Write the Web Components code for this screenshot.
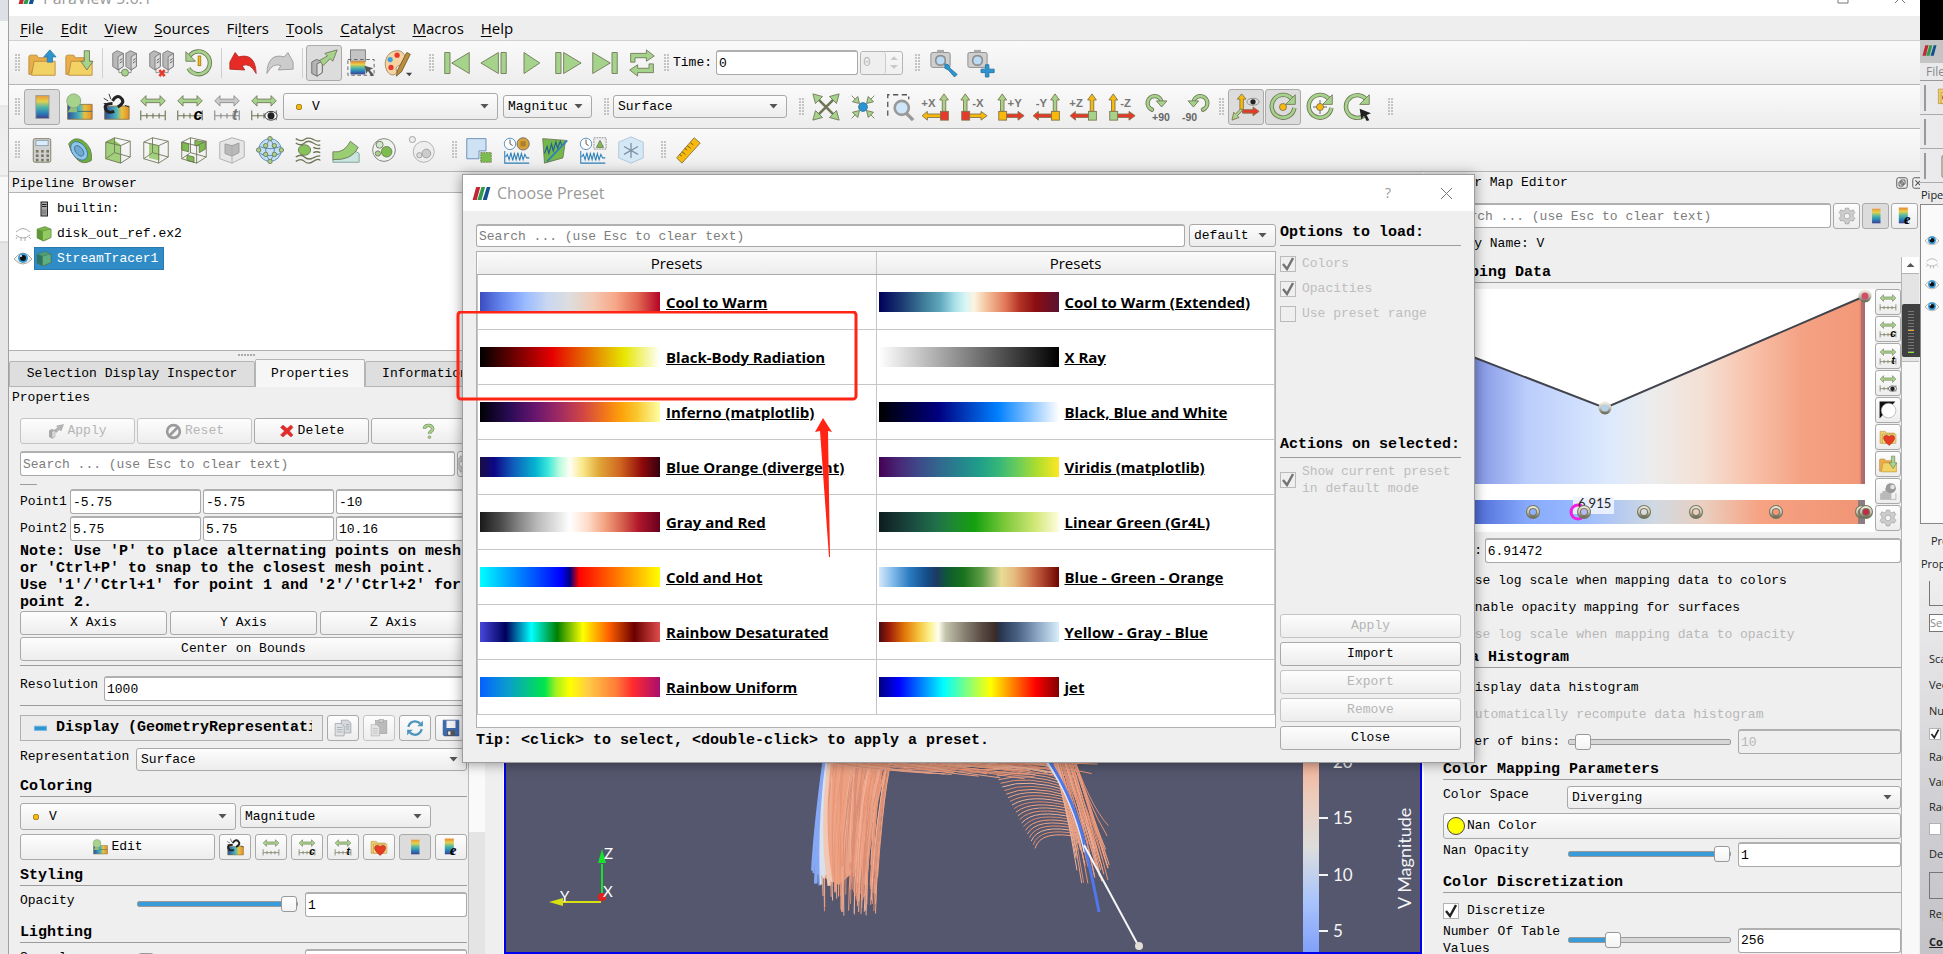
<!DOCTYPE html>
<html lang="en">
<head>
<meta charset="utf-8">
<title>ParaView 5.6.1</title>
<style>
html, body { margin: 0; height: 100%; }
body { font: 13px/18px "Liberation Mono", monospace; color: #000; overflow: hidden; }
</style>
</head>
<body>
<pv-desktop></pv-desktop>
<script>
const G = '#a6d38c', S = '#6f7657', B = '#2b95d0', Y = '#f6b90c', R = '#e5392b', N = '#c9c9c9', NS = '#8c8c8c';
const lut = (id, dim) => `<linearGradient id="${id}" x2="0" y2="1"><stop stop-color="${dim ? '#e89838' : '#e8862c'}"/><stop offset=".25" stop-color="#e6d04a"/><stop offset=".5" stop-color="#52b8a4"/><stop offset=".75" stop-color="#2b83b8"/><stop offset="1" stop-color="#3b3f8f"/></linearGradient>`;
const rng = (c, s) => `<path d="M2 9l6-6v4h16V3l6 6-6 6v-4H8v4z" fill="${c}" stroke="${s}"/><path d="M2 20v11M30 20v11M2 26h28M9 23v6M16 23v6M23 23v6" stroke="${s}" fill="none" stroke-width="1.3"/>`;
const server = x => `<path d="M${x} 5l5-3 7 3v15l-6 4-6-4z" fill="#b9b9b9" stroke="#777"/><path d="M${x + 6} 9l6-4v15l-6 4z" fill="#ddd" stroke="#777"/><path d="M${x + 8} 13l3-2M${x + 8} 16l3-2" stroke="#555"/>`;
const folder = `<path d="M1 9q0-2 2-2h7l2 3h15v5H9L3 29H1z" fill="#e9ae4a" stroke="#b98a3a"/><path d="M7 14h24v16H4z" fill="#f2d264" stroke="#b98a3a"/>`;
const cubeWire = `<path d="M2 7l10-5 18 4v18l-11 7L2 26zM2 7l17 4 11-5M19 11v20M12 2v17l-10 7M12 19l18 5" fill="none" stroke="${S}"/>`;
const curl = `fill="none" stroke-linecap="round"`;
const cam = `<rect x="1" y="4" width="22" height="17" rx="2" fill="#cfcfcf" stroke="#858585"/><rect x="8" y="1" width="8" height="3" fill="#aaa"/><circle cx="12" cy="13" r="6.500" fill="#8f8f8f"/><circle cx="12" cy="13" r="4.500" fill="#b9dcf4"/>`;
const axisPic = (t, tx, up, upc, side, sc, bc) => { const m = side < 0, bx = up - 4;
  return `<text x="${tx}" y="16" font-family="Liberation Sans" font-weight="bold" font-size="13" fill="#777">${t}</text><path d="M${up - 2} 21V8h-3l5-7 5 7h-3v13z" fill="${upc}" stroke="#81724c"/>` +
  (m ? `<path d="M${bx} 24H5v-3l-6 5 6 5v-3h${bx - 5}z" fill="${sc}" stroke="#81724c"/>` : `<path d="M${bx + 8} 24h${16 - bx}v-3l7 5-7 5v-3H${bx + 8}z" fill="${sc}" stroke="#81724c"/>`) +
  `<rect x="${bx}" y="21" width="9" height="10" fill="${bc}" stroke="#81724c"/>`; };
const gear = `<path d="M13 2h6l1 4 3 1 4-2 3 5-3 3v4l3 3-3 5-4-1-3 2-1 4h-6l-1-4-3-2-4 1-3-5 3-3v-4L2 10l3-5 4 2 3-1z" fill="#cdcdcd" stroke="#8d8d8d"/><circle cx="16" cy="16" r="5" fill="#f4f4f4" stroke="#8d8d8d"/>`;
const eyePic = `<path d="M0 8q9-12 18 0q-9 10-18 0z" fill="#eef3f6" stroke="#b4a895"/><circle cx="9" cy="7" r="5" fill="#3a9ad8"/><circle cx="9" cy="7" r="3" fill="#111"/><circle cx="7" cy="5" r="1" fill="#fff"/>`;
const calcDots = [9, 15, 21].map(x => [16, 21, 26].map(y => `<rect x="${x}" y="${y}" width="3" height="3" fill="#77775f"/>`).join('')).join('');
const wave = (y) => `<path d="M2 ${y - 7}v14h28M3 ${y}l2-3 2 6 2-8 2 9 2-8 2 7 2-8 2 9 2-8 2 7 2-6 2 4h3" fill="none" stroke="#2c7fb8" stroke-width="1.2"/>`;
const clock = `<circle cx="8" cy="9" r="6.500" fill="#fff" stroke="#4b86b5"/><path d="M8 4v5l3 2" stroke="#444" fill="none"/>`;
const ICONS = {
  logo: `<path d="M7 5h7L8 27H1z" fill="#c22733"/><path d="M16 5h6l-6 22h-7z" fill="#2c9a48"/><path d="M25 5h6l-6 22h-7z" fill="#14528f"/>`,
  open: folder + `<path d="M22 15V9h-4l7-8 7 8h-4v6z" fill="${B}" stroke="#3a7ba5"/>`,
  save: folder + `<path d="M22 2h6v12h4l-7 10-7-10h4z" fill="${G}" stroke="${S}"/>`,
  connect: server(2) + server(17) + `<path d="M9 22v5h14v-5" stroke="#888" fill="none"/><circle cx="16" cy="27" r="4" fill="${G}" stroke="${S}"/>`,
  disconnect: server(2) + server(17) + `<path d="M9 22v5h14v-5" stroke="#888" fill="none"/><path d="M13 24l6 7m0-7l-6 7" stroke="${R}" stroke-width="3"/>`,
  recover: `<path d="M5 8A13 13 0 1 1 4 22" fill="none" stroke="${S}" stroke-width="5"/><path d="M5 8A13 13 0 1 1 4 22" fill="none" stroke="${G}" stroke-width="3"/><path d="M1 3v11h11z" fill="${G}" stroke="${S}"/><rect x="15" y="8" width="3" height="11" fill="${Y}" stroke="#a07f22"/>`,
  undo: `<path d="M1 15l6-11 4 5q19-5 20 19-7-13-16-9l3 5-17-1z" fill="#e62a25" stroke="#b02c22"/>`,
  redo: `<path d="M31 15L25 4l-4 5Q2 4 1 28q7-13 16-9l-3 5 17-1z" fill="#ccc" stroke="#999"/>`,
  autoapply: `<path d="M2 15l5-3 7 2v13l-6 4-6-3z" fill="#b4b4b4" stroke="#666"/><path d="M8 17l6-3v13l-6 4z" fill="#e2e2e2" stroke="#666"/><path d="M11 13L20 8l-3-3 14-4-5 13-3-3-8 8z" fill="${G}" stroke="${S}"/>`,
  selrange: `<defs>${lut('a')}</defs><rect x="4" y="1" width="17" height="13" fill="#c4c4c4" stroke="#777"/><rect x="4" y="14" width="17" height="15" fill="url(#a)"/><path d="M1 12h30v18H1z" fill="none" stroke="#555" stroke-dasharray="4 3"/><path d="M20 19l10 3-4 2 5 6-3 1-4-6-2 3z" fill="#555"/>`,
  palette: `<path d="M14 2C3 3-2 16 4 26c4 6 12 4 10-2s8-5 10-10S22 1 14 2z" fill="#f6d3a0" stroke="#9b8763"/><circle cx="15" cy="7" r="3" fill="${R}"/><circle cx="7" cy="12" r="3" fill="#3aa0e0"/><circle cx="8" cy="21" r="3" fill="${R}"/><path d="M26 4l4 2-10 20-6 5 2-8z" fill="#bb8d3c" stroke="#6f5a2c"/><path d="M25 27h7l-3 4z" fill="#444"/>`,
  first: `<path d="M2 4h6v24H2zM30 4v24L10 16z" fill="${G}" stroke="${S}"/>`,
  prev: `<path d="M24 4h6v24h-6zM21 4v24L1 16z" fill="${G}" stroke="${S}"/>`,
  play: `<path d="M8 4v24l18-12z" fill="${G}" stroke="${S}"/>`,
  next: `<path d="M2 4h6v24H2zM11 4v24l20-12z" fill="${G}" stroke="${S}"/>`,
  last: `<path d="M24 4h6v24h-6zM2 4v24l20-12z" fill="${G}" stroke="${S}"/>`,
  loop: `<path d="M3 15V5h18V1l9 7-9 6v-4H8v5zM29 17v10H11v4l-9-7 9-6v4h13v-5z" fill="${G}" stroke="${S}"/>`,
  camedit: cam + `<path d="M17 17l4 1 2 4 8 7-3 3-7-8-4-2z" fill="${B}" stroke="#2773a5"/>`,
  camadd: cam + `<path d="M21 18h4v5h6v4h-6v5h-4v-5h-5v-4h5z" fill="${B}" stroke="#2773a5"/>`,
  legend: `<defs>${lut('b', 1)}</defs><rect x="9" y="3" width="15" height="26" fill="url(#b)" stroke="#999"/>`,
  legendsm: `<defs>${lut('b', 1)}</defs><rect x="9" y="3" width="15" height="26" fill="url(#b)"/>`,
  colormap: `<defs><linearGradient id="c"><stop stop-color="#2b4f9c"/><stop offset=".5" stop-color="#4fb7bb"/><stop offset=".7" stop-color="#eac23c"/><stop offset="1" stop-color="#e58a2c"/></linearGradient></defs><path d="M3 13h28v17H3z" fill="url(#c)" stroke="#8c7440"/><path d="M3 21h28" stroke="#3b6a6e"/><path d="M8 14h5l1 8H3z" fill="#8ec07a"/><circle cx="10" cy="9" r="8" fill="${G}" stroke="#8ba37a"/>`,
  unlink: `<defs><linearGradient id="d"><stop stop-color="#2b4f9c"/><stop offset=".5" stop-color="#4fb7bb"/><stop offset=".7" stop-color="#eac23c"/><stop offset="1" stop-color="#e58a2c"/></linearGradient></defs><path d="M3 15h28v15H3z" fill="url(#d)" stroke="#8c7440"/><path d="M12 9q5-8 10-3t-4 10M12 12q-10 0-8 6t10 3" fill="none" stroke="#222" stroke-width="3.500"/><path d="M2 6l5 3M8 1l2 6M26 14l5 2M2 12h4" stroke="#222"/>`,
  range: rng(G, S),
  rangec: rng(G, S) + `<text x="20" y="31" font-family="Liberation Sans" font-style="italic" font-weight="bold" font-size="18">c</text>`,
  ranget: rng(G, S) + `<text x="22" y="31" font-family="Liberation Sans" font-style="italic" font-weight="bold" font-size="18">t</text>`,
  rangetd: rng(N, NS) + `<text x="22" y="31" font-family="Liberation Sans" font-style="italic" font-weight="bold" font-size="18" fill="#777">t</text>`,
  rangeeye: rng(G, S) + `<ellipse cx="24" cy="26" rx="7" ry="5" fill="#fff" stroke="#222"/><circle cx="24" cy="26" r="4" fill="#222"/>`,
  reset: `<path d="M7 7l18 18M25 7L7 25" stroke="${S}" stroke-width="3"/><path d="M1 1l11 3-8 8zM31 1l-3 11-8-8zM1 31l3-11 8 8zM31 31l-11-3 8-8z" fill="${G}" stroke="${S}"/>`,
  zoomdata: `<circle cx="16" cy="16" r="5" fill="${B}" stroke="#2773a5"/><path d="M12 12L10 4 4 10zM20 12l2-8 6 6zM12 20l-8 2 6 6zM20 20l8 2-6 6z" fill="${G}" stroke="${S}"/><path d="M3 3l4 4M29 3l-4 4M3 29l4-4M29 29l-4-4" stroke="${S}"/>`,
  zoombox: `<path d="M2 26V2h24v5" fill="none" stroke="#555" stroke-dasharray="6 4" stroke-width="1.500"/><path d="M23 23l8 8" stroke="#999" stroke-width="4"/><circle cx="18" cy="17" r="8" fill="#cfe6f8" stroke="#999" stroke-width="3"/>`,
  px: axisPic('+X', -2, 24, G, -1, Y, R), mx: axisPic('-X', 14, 6, G, 1, Y, R),
  py: axisPic('+Y', 12, 6, G, 1, R, Y), my: axisPic('-Y', 2, 24, G, -1, R, Y),
  pz: axisPic('+Z', -2, 24, Y, -1, R, G), mz: axisPic('-Z', 14, 6, Y, 1, R, G),
  rot1: `<path d="M8 19a8 8 0 1 1 11-8" ${curl} stroke="${S}" stroke-width="5"/><path d="M8 19a8 8 0 1 1 11-8" ${curl} stroke="${G}" stroke-width="3"/><path d="M13 9h12l-6 7z" fill="${G}" stroke="${S}"/><text x="8" y="32" font-family="Liberation Sans" font-weight="bold" font-size="12" fill="#666">+90</text>`,
  rot2: `<path d="M24 19a8 8 0 1 0-11-8" ${curl} stroke="${S}" stroke-width="5"/><path d="M24 19a8 8 0 1 0-11-8" ${curl} stroke="${G}" stroke-width="3"/><path d="M19 9H7l6 7z" fill="${G}" stroke="${S}"/><text x="0" y="32" font-family="Liberation Sans" font-weight="bold" font-size="12" fill="#666">-90</text>`,
  axes: `<path d="M9 19V7H6l5-6 5 6h-3v12z" fill="${Y}" stroke="#81724c"/><path d="M12 19h12v-3l7 5-7 5v-3H12z" fill="${R}" stroke="#81724c"/><path d="M12 20l-6 6 2 2-8 3 2-9 2 2 6-6z" fill="${G}" stroke="#81724c"/><ellipse cx="24" cy="10" rx="7" ry="4" fill="#ddd" stroke="#888"/><circle cx="24" cy="10" r="3" fill="#222"/>`,
  ctr1: `<path d="M27 8A13 13 0 1 0 29 17" fill="none" stroke="${S}" stroke-width="5"/><path d="M27 8A13 13 0 1 0 29 17" fill="none" stroke="${G}" stroke-width="3"/><path d="M30 2v11H19z" fill="${G}" stroke="${S}"/><circle cx="16" cy="16" r="4" fill="${Y}" stroke="#81724c"/>`,
  ctr2: `<path d="M27 8A13 13 0 1 0 29 17" fill="none" stroke="${S}" stroke-width="5"/><path d="M27 8A13 13 0 1 0 29 17" fill="none" stroke="${G}" stroke-width="3"/><path d="M30 2v11H19z" fill="${G}" stroke="${S}"/><circle cx="16" cy="16" r="4" fill="${Y}" stroke="#81724c"/><path d="M16 8v4M16 20v4M8 16h4M20 16h4" stroke="#555"/>`,
  ctr3: `<path d="M27 8A13 13 0 1 0 24 26" fill="none" stroke="${S}" stroke-width="5"/><path d="M27 8A13 13 0 1 0 24 26" fill="none" stroke="${G}" stroke-width="3"/><path d="M30 2v11H19z" fill="${G}" stroke="${S}"/><path d="M19 18l13 5-5 2 3 6-3 1-3-6-3 4z" fill="#222"/>`,
  calc: `<rect x="6" y="3" width="20" height="27" rx="2" fill="#d0d0d0" stroke="#77775f"/><rect x="9" y="5" width="14" height="6" fill="#d8ecfa" stroke="#8a9aa6"/>${calcDots}`,
  contour: `<path d="M3 9Q9 0 19 5q12 8 10 23-10 6-17-2T3 9z" fill="#68b23c" stroke="${S}"/><ellipse cx="15" cy="17" rx="8" ry="12" transform="rotate(-38 15 17)" fill="#8cc4ea" stroke="#497191"/><ellipse cx="15" cy="17" rx="4" ry="7" transform="rotate(-38 15 17)" fill="#6da9d2" stroke="#497191"/>`,
  clip: `<path d="M2 7l10-5v3l7 5v21L2 26z" fill="#8dc35f"/><path d="M2 7l17 4v20L2 26z" fill="#a2cf7c"/>` + cubeWire,
  slice: `<path d="M8 8l12 3v17L8 25z" fill="#a2cf7c"/>` + cubeWire,
  thresh: `<path d="M2 7l8 2v9l-8-2zM17 5l12 2v8l-7 4v-8h-5zM8 22l8 2v6l-8-2z" fill="#7dbb4c" stroke="${S}"/>` + cubeWire,
  subset: `<path d="M2 7l14-5 14 4v18l-14 7-14-5z" fill="#e6e6e6" stroke="#aaa"/><path d="M8 9l8 2 8-3v11l-8 4-8-3z" fill="#b9b9b9" stroke="#999"/><path d="M16 11v20" stroke="#aaa"/>`,
  glyph: `<circle cx="16" cy="16" r="13" fill="#c5def2" stroke="#4b86b5"/><path d="M16 3Q6 16 16 29M16 3q10 13 0 26M4 12q12 5 24 0M4 20q12 5 24 0" fill="none" stroke="#4b86b5"/>` + [[16, 3], [3, 16], [29, 16], [16, 29], [11, 11], [21, 11], [11, 21], [21, 21]].map(p => `<circle cx="${p[0]}" cy="${p[1]}" r="2.500" fill="${G}" stroke="${S}"/>`).join(''),
  stream: `<path d="M2 3q6 4 10 1t10 0 8 1M2 8q6 4 10 0t10 0 8 2M2 24q6-4 10 0t10 1 8-2M2 29q6-4 10 0t10 0 8-1M22 13q4 2 8 1M22 19q4-2 8 0" fill="none" stroke="${S}" stroke-width="1.500"/><ellipse cx="12" cy="16" rx="7" ry="6" fill="#86c35a" stroke="${S}"/>`,
  warp: `<path d="M1 27q16 0 22-12l8 5v10H1z" fill="#c9e5e0" stroke="#7a9a94"/><path d="M1 18q13 2 20-12l9 7q-7 15-29 14z" fill="#9ace74" stroke="${S}"/>`,
  group: `<circle cx="16" cy="16" r="13" fill="#eef3ee" stroke="#777"/><circle cx="11" cy="10" r="4" fill="#cfe7cf" stroke="${S}"/><circle cx="19" cy="18" r="6" fill="#7cbd4f" stroke="${S}"/><circle cx="9" cy="20" r="3" fill="${G}" stroke="${S}"/>`,
  extract: `<circle cx="18" cy="18" r="12" fill="#eee" stroke="#aaa"/><circle cx="5" cy="4" r="3.500" fill="#eee" stroke="#999"/><circle cx="21" cy="20" r="5" fill="#ccc" stroke="#999"/><circle cx="13" cy="22" r="3" fill="#ddd" stroke="#999"/>`,
  sel: `<path d="M2 3h22v14h-8v9H2z" fill="#cfe2f3" stroke="#5b87b3"/><rect x="18" y="19" width="12" height="11" fill="#7cbd4f" stroke="${S}" stroke-dasharray="2 1"/>`,
  plot1: clock + `<circle cx="23" cy="9" r="7" fill="#d9a13a" stroke="#666"/><rect x="20" y="6" width="6" height="6" fill="#a8812e"/>` + wave(24),
  plotline: `<path d="M2 3l26 2-3 20-21 6z" fill="#74b84a" stroke="${S}"/><path d="M4 20l3-8 2 8 3-11 2 8 3-10 2 7 3-8 2 5" fill="none" stroke="#1f5f94" stroke-width="1.300"/><path d="M7 29L30 5" stroke="#2c7fb8" stroke-width="2"/>`,
  plot2: clock + `<rect x="17" y="2" width="14" height="13" fill="#eee" stroke="#888" stroke-dasharray="2 1"/><path d="M24 5l4 8h-8z" fill="#7cbd4f" stroke="${S}"/>` + wave(24),
  cubeq: `<path d="M2 7l14-6 14 6v18l-14 6-14-6z" fill="#d5e8f6" stroke="#aac4d8"/><path d="M16 8v17M8 12l16 9M24 12L8 21" stroke="#7b93a6" stroke-width="1.500"/>`,
  ruler: `<path d="M3 25L23 2l7 6L9 31z" fill="${Y}" stroke="#81724c"/><path d="M6 21l3 2M9 18l4 3M12 14l3 2M15 11l4 3M19 8l3 2" stroke="#665422"/>`,
  apply: `<path d="M2 15l5-3 7 2v13l-6 4-6-3z" fill="#aaa"/><path d="M8 17l6-3v13l-6 4z" fill="#ddd" stroke="#999"/><path d="M13 14L20 9l-3-3 14-3-5 13-3-3-7 6z" fill="#b5b5b5" stroke="#999"/>`,
  forbid: `<circle cx="16" cy="16" r="12" fill="none" stroke="#9a9a9a" stroke-width="5"/><path d="M8 24L24 8" stroke="#9a9a9a" stroke-width="5"/>`,
  cross: `<path d="M8 4l8 7 8-7 4 5-7 7 7 8-4 4-8-7-8 7-5-4 8-8-8-7z" fill="#e8292b" stroke="#a83a2e"/>`,
  help: `<path d="M7 10Q8 3 16 3t9 7q0 4-5 7-2 2-2 4" fill="none" stroke="${S}" stroke-width="7"/><path d="M7 10Q8 3 16 3t9 7q0 4-5 7-2 2-2 4" fill="none" stroke="${G}" stroke-width="5"/><circle cx="18" cy="28" r="3" fill="${G}" stroke="${S}"/>`,
  minus: `<rect x="3" y="11" width="26" height="9" fill="${B}" stroke="#7ab6dd" stroke-width="2"/>`,
  copy: `<path d="M13 2h12l5 5v18H13z" fill="#d4d9de" stroke="#858b90"/><path d="M2 8h11l5 5v17H2z" fill="#dfe3e6" stroke="#858b90"/><path d="M5 15h10M5 19h10M5 23h10M21 10h6M21 14h6M21 18h6" stroke="#858b90"/>`,
  paste: `<rect x="10" y="3" width="20" height="23" fill="#bbb" stroke="#999"/><rect x="16" y="1" width="8" height="5" fill="#ccc" stroke="#999"/><path d="M2 10h10l5 5v15H2z" fill="#e3e3e3" stroke="#aaa"/><path d="M5 17h9M5 21h9M5 25h9" stroke="#aaa"/>`,
  refresh: `<path d="M4 14Q7 4 16 4q6 0 9 4M28 18q-3 10-12 10-6 0-9-4" fill="none" stroke="#4a94bd" stroke-width="4"/><path d="M30 3v10H20zM2 29V19h10z" fill="#4a94bd"/>`,
  disk: `<path d="M2 2h28v28H4l-2-2z" fill="#3c6bb0" stroke="#244a80"/><rect x="8" y="3" width="16" height="13" fill="#f2f2f2"/><rect x="9" y="20" width="14" height="10" fill="#555"/><rect x="11" y="22" width="4" height="6" fill="#eee"/>`,
  heart: `<path d="M2 6h9l2 3h14v18H2z" fill="#edcf6a" stroke="#b98a3a"/><path d="M6 11h24v16H6z" fill="#f5df86" stroke="#b98a3a"/><path d="M18 31q-10-8-10-13t5-5 5 4q0-4 5-4t5 5-10 13z" fill="#e63b24" stroke="#a8402c"/>`,
  edite: `<defs>${lut('e')}</defs><rect x="5" y="1" width="16" height="28" fill="url(#e)"/><text x="14" y="31" font-family="Liberation Serif" font-style="italic" font-weight="bold" font-size="26">e</text>`,
  invert: `<path d="M1 1h28L1 31z" fill="#111"/><circle cx="17" cy="17" r="13" fill="#fff" stroke="#999"/>`,
  hist: `<path d="M2 30V20h4v-4h5v-5h5V5h6v25z" fill="#b9b9b9"/><path d="M2 31h28M30 31V20" stroke="#999"/><circle cx="21" cy="11" r="9" fill="#999"/><circle cx="24" cy="9" r="4" fill="#e4e4e4"/>`,
  gear,
  host: `<rect x="10" y="2" width="13" height="28" fill="#aaa" stroke="#222" stroke-width="2"/><path d="M12 7h9M12 11h9" stroke="#222" stroke-width="2"/><path d="M12 17h9v10h-9z" fill="#888"/>`,
  cube: `<path d="M2 6l16-5 12 5v17l-14 7-14-6z" fill="#7ab648" stroke="#5d7a40"/><path d="M2 6l11 4v20L2 24z" fill="#5c9838"/><path d="M13 10l17-4v17l-17 7z" fill="#93cc5e" stroke="#5d7a40"/>`,
  cubesel: `<path d="M2 6l16-5 12 5v17l-14 7-14-6z" fill="#4d9f78" stroke="#4b6b58"/><path d="M2 6l11 4v20L2 24z" fill="#2f7360"/><path d="M13 10l17-4v17l-17 7z" fill="#5cb080" stroke="#4b6b58"/>`,
  float: `<rect x="2" y="2" width="28" height="28" rx="5" fill="none" stroke="#555" stroke-width="2.500"/><path d="M13 8h11v11H13zM8 13h11v11H8z" fill="#eee" stroke="#555" stroke-width="2.500"/>`,
  close: `<rect x="2" y="2" width="28" height="28" rx="5" fill="none" stroke="#555" stroke-width="2.500"/><path d="M9 9l14 14M23 9L9 23" stroke="#555" stroke-width="3"/>`
};
const CONTROLS = `
:host { box-sizing: border-box; display: block; }
* { box-sizing: border-box; }
button, input, select { font: inherit; color: inherit; margin: 0; min-width: 0; }
button { display: flex; align-items: center; justify-content: center; border: 1px solid #a9a9a9; border-radius: 3px; padding: 0; background: linear-gradient(#fdfdfd, #ededed); }
button:disabled { border-color: #c4c4c4; color: #b5b5b5; }
button.on { background: #dcdcdc; }
input[type=text] { height: 25px; width: 100%; border: 1px solid #a9a9a9; border-top: 2px solid #b0b0b0; border-radius: 3px; background: #fff; padding: 0 2px; }
input[type=text]:disabled { background: #efefef; color: #b8b8b8; }
input::placeholder { color: #7d7d7d; }
input[type=checkbox] { appearance: none; width: 16px; height: 16px; flex: none; border: 1px solid #b2b2b2; background: #fff no-repeat center / 12px 14px; }
input[type=checkbox]:checked { background-image: url("data:image/svg+xml,%3Csvg xmlns='http://www.w3.org/2000/svg' viewBox='0 0 12 14'%3E%3Cpath d='M1 7l4 5L11 1' fill='none' stroke='%23222' stroke-width='2.4'/%3E%3C/svg%3E"); }
input[type=checkbox]:disabled { background-color: #efefef; border-color: #999; opacity: .6; }
input[type=range] { appearance: none; width: 100%; height: 16px; background: none; --v: 0%; }
input[type=range]::-webkit-slider-runnable-track { height: 6px; border: 1px solid #9a9a9a; border-radius: 2px; background: linear-gradient(90deg, #3a9bd9 var(--v), #d6d6d6 var(--v)); }
input[type=range]::-webkit-slider-thumb { appearance: none; width: 16px; height: 16px; margin-top: -6px; border: 1px solid #999; border-radius: 3px; background: linear-gradient(#fff, #f3f3f3); }
.row { display: flex; align-items: flex-start; }
.grow { flex: 1; min-width: 0; }
.dis { color: #b8b8b8; }
h3 { font: bold 15px/18px "Liberation Mono", monospace; margin: 7px 0 6px; border-bottom: 1px solid #9c9c9c; white-space: nowrap; }
hr { border: 0; border-top: 1px solid #9c9c9c; margin: 0; }
`;
function define(name, html, ready) {
  const t = document.createElement('template');
  t.innerHTML = html;
  customElements.define(name, class extends HTMLElement {
    constructor() { super(); this.attachShadow({ mode: 'open' }).append(t.content.cloneNode(true)); }
    connectedCallback() { if (ready && !this.done) { this.done = true; ready(this, this.shadowRoot); } }
  });
}
define('pv-icon', `<style>:host{display:block;flex:none;width:var(--s);height:var(--s);}svg{display:block;width:100%;height:100%;overflow:visible}</style><svg viewBox="0 0 32 32" aria-hidden="true"></svg>`, (h, r) => {
  h.style.setProperty('--s', (h.getAttribute('size') || 28) + 'px');
  r.querySelector('svg').innerHTML = ICONS[h.getAttribute('name')];
});
define('pv-eye', `<style>:host{display:block;width:18px;height:16px}svg{display:block;width:100%;height:100%}</style><svg viewBox="0 0 18 16" aria-hidden="true"></svg>`, (h, r) => {
  r.querySelector('svg').innerHTML = h.hasAttribute('shut') ? `<path d="M2 6q7-7 14 0M2 9q7 6 14 0M3 11l-1 2M7 12v3M11 12v3M15 11l2 2" fill="none" stroke="#aaa"/>` : eyePic;
});
define('tool-button', `<style>${CONTROLS}:host{flex:none}button{width:36px;height:36px;border-color:transparent;background:none}:host([on]) button{border-color:#aaa;background:#dcdcdc}</style><button type="button"></button>`, (h, r) => {
  const n = h.getAttribute('name'), b = r.querySelector('button');
  b.innerHTML = `<pv-icon name="${n}" size="${h.getAttribute('size') || 28}"></pv-icon>`;
  b.setAttribute('aria-label', n);
});
define('small-button', `<style>${CONTROLS}:host{flex:none;width:32px;height:26px}button{width:100%;height:100%;overflow:hidden}</style><button type="button"></button>`, (h, r) => {
  const n = h.getAttribute('name'), b = r.querySelector('button');
  b.innerHTML = `<pv-icon name="${n}" size="${h.getAttribute('size') || 18}"></pv-icon>`;
  b.setAttribute('aria-label', n); b.disabled = h.hasAttribute('disabled'); b.classList.toggle('on', h.hasAttribute('on'));
});
define('pv-select', `<style>${CONTROLS}
:host{position:relative;height:23px}
select{appearance:none;width:100%;height:100%;border:1px solid #a9a9a9;border-radius:3px;background:linear-gradient(#fdfdfd,#ececec);padding:0 24px 0 4px}
:host([dot]) select{padding-left:28px}
.a{position:absolute;right:9px;top:calc(50% - 3px);width:9px;height:5px;background:#555;clip-path:polygon(0 0,100% 0,50% 100%);pointer-events:none}
.d{position:absolute;left:13px;top:calc(50% - 3px);width:6px;height:6px;border:1px solid #a98526;border-radius:2px;background:#f6b90c;display:none}
:host([dot]) .d{display:block}
</style><select><option></option></select><span class="a"></span><span class="d"></span>`, (h, r) => {
  r.querySelector('option').textContent = h.getAttribute('value');
  r.querySelector('select').setAttribute('aria-label', h.getAttribute('label'));
});
define('bar-grip', `<style>:host{display:block;flex:none;width:5px;height:18px;background:radial-gradient(circle at 1px 1px,#c4c4c4 1px,transparent 1px) 0 0/3px 3px}</style>`);
define('bar-sep', `<style>:host{display:block;flex:none;width:1px;height:30px;background:#cfcfcf}</style>`);
define('tool-bar', `<style>:host{display:flex;align-items:center;height:44px;flex:none;box-sizing:border-box;padding-left:6px;background:linear-gradient(#fafafa,#ededed);border-bottom:1px solid #b4b4b4}</style><slot></slot>`);

const tb = (list, gap) => list.split(' ').map(n => `<tool-button name="${n.replace('!', '')}"${n.includes('!') ? ' on' : ''} style="margin-right:${gap}px"></tool-button>`).join('');
define('pv-toolbars', `<style>${CONTROLS}
bar-grip{margin-right:4px} .g{margin-left:12px}
tool-bar pv-select{flex:none}
label{margin-right:4px}
input.time{width:142px;margin-right:2px}
.spin{display:flex;width:43px;height:24px;border:1px solid #b5b5b5;border-radius:3px;color:#bbb}
.spin input[type=text]{width:25px;border:0;height:22px;border-right:1px solid #ccc;background:#efefef}
.spin span{flex:1;display:flex;flex-direction:column;align-items:center;justify-content:space-evenly}
i{width:8px;height:4px;background:#c9c9c9;clip-path:polygon(0 100%,100% 100%,50% 0)} i+i{transform:rotate(180deg)}
</style>
<tool-bar><bar-grip></bar-grip>${tb('open save', 1)}<bar-sep style="margin:0 4px"></bar-sep>${tb('connect disconnect recover', 1)}<bar-sep style="margin:0 3px"></bar-sep>${tb('undo redo', 1)}<bar-sep style="margin:0 3px"></bar-sep>${tb('autoapply! selrange palette', 1)}<bar-grip class="g" style="margin-right:5px"></bar-grip>${tb('first prev play next last loop', 1)}<bar-grip style="margin:0 4px 0 3px"></bar-grip><label for="t">Time:</label><input id="t" class="time" type="text" value="0"><div class="spin"><input type="text" aria-label="Time step" value="0" disabled><span><i></i><i></i></span></div><bar-grip class="g" style="margin-right:6px"></bar-grip>${tb('camedit camadd', 1)}</tool-bar>
<tool-bar><bar-grip></bar-grip>${tb('legend! colormap unlink range rangec rangetd rangeeye', 1)}<pv-select dot value="V" label="Color array" style="width:215px;height:27px;margin-right:5px"></pv-select><pv-select value="Magnitude" label="Component" style="width:89px"></pv-select><bar-grip class="g"></bar-grip><pv-select value="Surface" label="Representation" style="width:174px"></pv-select><bar-grip class="g"></bar-grip>${tb('reset zoomdata zoombox px mx py my pz mz rot1 rot2', 1)}<bar-grip style="margin:0 4px"></bar-grip>${tb('axes! ctr1! ctr2 ctr3', 1)}<bar-grip class="g"></bar-grip></tool-bar>
<tool-bar style="height:43px"><bar-grip></bar-grip>${tb('calc contour clip slice thresh subset glyph stream warp group extract', 2)}<bar-grip class="g" style="margin-left:10px"></bar-grip>${tb('sel plot1 plotline plot2 cubeq', 2)}<bar-grip class="g" style="margin-left:10px"></bar-grip>${tb('ruler', 1)}</tool-bar>`);

define('title-bar', `<style>:host{display:flex;align-items:center;height:37px;flex:none;background:#fff;color:#999;font:16px/22px "Open Sans",sans-serif;padding-left:9px}slot{display:block}.t{flex:1;margin-left:6px}</style><pv-icon name="logo" size="19"></pv-icon><div class="t"><slot></slot></div><slot name="end"></slot>`);
define('menu-bar', `<style>${CONTROLS}:host{display:flex;gap:17px;height:25px;padding-left:11px;background:#eee;border-bottom:1px solid #d0d0d0;font:15px/22px "Open Sans",sans-serif;flex:none}button{border:0;background:none}u{text-underline-offset:2px}</style>` +
  ['<u>F</u>ile', '<u>E</u>dit', '<u>V</u>iew', '<u>S</u>ources', 'Fi<u>l</u>ters', '<u>T</u>ools', '<u>C</u>atalyst', '<u>M</u>acros', '<u>H</u>elp'].map(m => `<button type="button"><span>${m}</span></button>`).join(''));

define('pipeline-browser', `<style>${CONTROLS}
.h{height:21px;line-height:23px;padding-left:3px;border-bottom:1px solid #b4b4b4}
ul{list-style:none;margin:0;padding:3px 0 0;height:158px;background:#fff;border-bottom:1px solid #b0b0b0}
li{display:grid;grid-template-columns:18px 1fr;column-gap:3px;height:25px;align-items:center;padding-left:5px}
span{display:flex;align-items:center;gap:5px;height:21px;width:max-content;padding:0 5px 0 1px}
.s{background:#308cc6;color:#fff;outline:1px solid #2a7ab0}
.grip{width:18px;height:2px;margin:3px auto;background:radial-gradient(circle at 1px 1px,#aaa 1px,transparent 1px) 0 0/3px 3px}
</style><div class="h">Pipeline Browser</div>
<ul><li><i></i><span><pv-icon name="host" size="16"></pv-icon>builtin:</span></li><li><pv-eye shut></pv-eye><span><pv-icon name="cube" size="16"></pv-icon>disk_out_ref.ex2</span></li><li><pv-eye></pv-eye><span class="s"><pv-icon name="cubesel" size="16"></pv-icon>StreamTracer1</span></li></ul><div class="grip"></div>`);

define('properties-panel', `<style>${CONTROLS}
:host{flex:1;min-height:0;overflow:hidden}
.tabs{display:flex;align-items:flex-end;height:28px}
.tabs button{height:26px;border-radius:2px 2px 0 0;background:#dedede;padding:0 14px;border-color:#b4b4b4;flex:none;white-space:nowrap}
.tabs .cur{height:28px;background:#f6f6f6;border-bottom:0;padding:0 13px}
.cap{height:31px;line-height:22px;padding-left:3px}
.cols{display:grid;grid-template-columns:minmax(0,1fr) 17px}
.body{padding:0 1px 0 11px}
.sb{background:linear-gradient(#fafafa,#fafafa) 0 0/100% 414px no-repeat #e4e4e4;border-left:1px solid #bbb}
.b4{display:grid;grid-template-columns:repeat(4,115px);gap:2px;height:26px;margin-bottom:7px}
.b4 button{gap:3px}
.pt{display:grid;grid-template-columns:48px repeat(3,1fr);gap:2px;margin-bottom:2px;align-items:center}
p{font:bold 15px/17px "Liberation Mono",monospace;margin:0;white-space:nowrap}
.ax{display:grid;grid-template-columns:repeat(3,1fr);gap:3px;margin-bottom:2px}
.ax button,.ctr{height:24px;width:100%}
.disp{display:flex;gap:4px;margin:9px 0 7px}
.grp{flex:1;min-width:0;overflow:hidden;white-space:nowrap;border:1px solid #b0b0b0;height:26px;display:flex;align-items:center;gap:8px;padding:0 10px 0 12px;font:bold 15px/24px "Liberation Mono",monospace;justify-content:flex-start;background:#ebebeb;border-radius:0}
.grp span{overflow:hidden}
.op{display:grid;grid-template-columns:117px minmax(0,1fr) 162px;column-gap:0;align-items:start}
.op input[type=range]{margin-top:4px;width:161px}
</style>
<div class="tabs"><button type="button" style="width:246px">Selection Display Inspector</button><button class="cur" type="button" style="width:110px">Properties</button><button type="button" style="width:120px">Information</button></div>
<div class="cap">Properties</div>
<div class="cols"><div class="body">
<div class="b4"><button type="button" disabled><pv-icon name="apply" size="16"></pv-icon>Apply</button><button type="button" disabled><pv-icon name="forbid" size="17"></pv-icon>Reset</button><button type="button"><pv-icon name="cross" size="16"></pv-icon>Delete</button><button type="button" aria-label="Help"><pv-icon name="help" size="15"></pv-icon></button></div>
<div class="row" style="gap:2px"><input class="grow" type="text" aria-label="Search properties" placeholder="Search ... (use Esc to clear text)"><small-button name="gear" style="width:10px"></small-button></div>
<hr style="width:17px;margin:7px 0 4px">
<div class="pt"><label for="p1">Point1</label><input id="p1" type="text" value="-5.75"><input aria-label="Point1 y" type="text" value="-5.75"><input aria-label="Point1 z" type="text" value="-10"></div>
<div class="pt"><label for="p2">Point2</label><input id="p2" type="text" value="5.75"><input aria-label="Point2 y" type="text" value="5.75"><input aria-label="Point2 z" type="text" value="10.16"></div>
<p>Note: Use 'P' to place alternating points on mesh<br>or 'Ctrl+P' to snap to the closest mesh point.<br>Use '1'/'Ctrl+1' for point 1 and '2'/'Ctrl+2' for<br>point 2.</p>
<div class="ax"><button type="button">X Axis</button><button type="button">Y Axis</button><button type="button">Z Axis</button></div>
<button class="ctr" type="button">Center on Bounds</button>
<hr style="margin:4px 0 10px">
<div class="row"><label for="rs" style="width:84px">Resolution</label><input id="rs" class="grow" type="text" value="1000"></div>
<hr style="margin:4px 0 0">
<div class="disp"><button class="grp" type="button"><pv-icon name="minus" size="15"></pv-icon><span>Display (GeometryRepresentation)</span></button><small-button name="copy"></small-button><small-button name="paste" disabled></small-button><small-button name="refresh"></small-button><small-button name="disk"></small-button></div>
<div class="row"><span style="width:116px">Representation</span><pv-select class="grow" value="Surface" label="Representation"></pv-select></div>
<h3>Coloring</h3>
<div class="row" style="gap:4px;align-items:center"><pv-select dot value="V" label="Color array" style="width:216px;height:27px"></pv-select><pv-select value="Magnitude" label="Component" style="width:191px"></pv-select></div>
<div class="row" style="gap:4px;margin-top:4px"><button class="grow" type="button" style="height:26px;gap:3px"><pv-icon name="colormap" size="16"></pv-icon>Edit</button><small-button name="unlink"></small-button><small-button name="range"></small-button><small-button name="rangec"></small-button><small-button name="ranget"></small-button><small-button name="heart"></small-button><small-button name="legendsm" on></small-button><small-button name="edite"></small-button></div>
<h3>Styling</h3>
<div class="op"><label for="op">Opacity</label><input id="op" type="range" value="100" style="--v:95%"><input aria-label="Opacity value" type="text" value="1"></div>
<h3>Lighting</h3>
<div class="op"><label for="sp">Specular</label><input id="sp" type="range" value="0"><input aria-label="Specular value" type="text" value="0"></div>
</div><div class="sb"></div></div>`);

define('transfer-plot', `<style>:host{display:block;background:#fff;height:243px}svg{display:block;width:100%;height:100%}</style>
<svg viewBox="1443 288 432 243" preserveAspectRatio="xMaxYMin slice"><defs>
<linearGradient id="f" gradientUnits="userSpaceOnUse" x1="1443" x2="1866"><stop stop-color="#6b80e0"/><stop offset=".073" stop-color="#8092e2"/><stop offset=".2" stop-color="#bacdfc"/><stop offset=".4" stop-color="#ddeafd"/><stop offset=".5" stop-color="#ececec"/><stop offset=".62" stop-color="#f4dfd3"/><stop offset=".74" stop-color="#f8bfa6"/><stop offset=".85" stop-color="#f4a284"/><stop offset=".985" stop-color="#f29878"/><stop offset="1" stop-color="#cf5a58"/></linearGradient>
<linearGradient id="c" gradientUnits="userSpaceOnUse" x1="1443" x2="1866"><stop stop-color="#3b4cc0"/><stop offset=".073" stop-color="#4d69d6"/><stop offset=".2" stop-color="#86a9fc"/><stop offset=".33" stop-color="#9abbff"/><stop offset=".5" stop-color="#d0d9e2"/><stop offset=".62" stop-color="#eacfbf"/><stop offset=".75" stop-color="#f6a283"/><stop offset="1" stop-color="#f09475"/></linearGradient>
<linearGradient id="k" x2="0" y2="1"><stop stop-color="#eceadb"/><stop offset=".5" stop-color="#c4c4b0"/><stop offset="1" stop-color="#6f6f5c"/></linearGradient></defs>
<path d="M1443 344l163 63 260-112v188h-423z" fill="url(#f)"/><path d="M1862 297h4v186h-4z" fill="#9a6c74" opacity=".7"/><path d="M1443 344l163 63 260-112" fill="none" stroke="#41444c" stroke-width="2"/>
<g fill="none"><circle cx="1606" cy="407" r="5" fill="#b5d0ee" stroke="url(#k)" stroke-width="3"/><circle cx="1866" cy="295" r="5" fill="#d0506a" stroke="url(#k)" stroke-width="3"/></g>
<rect x="1443" y="499" width="423" height="24" fill="url(#c)"/><rect x="1859" y="499" width="7" height="24" fill="#8d7c80"/>
<rect x="1574" y="496" width="41" height="17" fill="#eef3ff" opacity=".9"/><circle cx="1579" cy="511" r="7" fill="none" stroke="#f020e0" stroke-width="3"/>
<text x="1579" y="507" font-family="Lato, sans-serif" font-size="13" fill="#222">6.915</text>
<g>${[[1534, '#8fb0fa'], [1585, '#b9b8f4'], [1645, '#d8dbe0'], [1697, '#ecccbc'], [1777, '#f5987a'], [1863, '#8d7c80'], [1867, '#c22b45']].map(p => `<circle cx="${p[0]}" cy="511" r="5" fill="${p[1]}" stroke="#77775f" stroke-width="4"/><circle cx="${p[0]}" cy="511" r="5" fill="none" stroke="url(#k)" stroke-width="2"/>`).join('')}</g></svg>`);

define('color-map-editor', `<style>${CONTROLS}
:host{width:497px;flex:none;overflow:hidden;background:#efefef;padding-left:19px;border-left:1px solid #fff}
.h{display:flex;height:21px;line-height:23px;gap:4px;align-items:center;margin-right:-4px}
.h span{flex:1}
.s{display:flex;gap:2px;margin:10px 2px 0 0}
.s small-button{width:27px}
.n{height:28px;line-height:30px}
.cols{display:grid;grid-template-columns:minmax(0,1fr) 18px 1px}
.sb{border-left:1px solid #b4b4b4;background:linear-gradient(#fff 16px,#b4b4b4 16px,#b4b4b4 17px,#e4e4e4 17px,#e4e4e4 104px,#bbb 104px,#bbb 105px,#f8f8f8 105px);display:flex;justify-content:center}
.sb i{width:8px;height:4px;margin-top:6px;background:#555;clip-path:polygon(0 100%,100% 100%,50% 0)}
.plot{display:grid;grid-template-columns:minmax(0,1fr) 26px;column-gap:1px;background:#fff}
.tools{display:grid;grid-auto-rows:26px;gap:1px;background:#efefef}
.tools small-button{width:26px}
.ck{display:flex;align-items:center;gap:8px;height:27px}
.r{display:grid;grid-template-columns:125px minmax(0,1fr) 163px;align-items:start}
.r input[type=range]{margin-top:4px;width:163px}
.nan{width:100%;height:26px;justify-content:flex-start;gap:2px;padding-left:3px}
.nan i{width:18px;height:18px;border-radius:9px;background:#ff0;border:1px solid #444}
</style>
<div class="h"><span>Color Map Editor</span><pv-icon name="float" size="12"></pv-icon><pv-icon name="close" size="12"></pv-icon></div>
<div class="s"><input class="grow" type="text" aria-label="Search color map" placeholder="Search ... (use Esc to clear text)"><small-button name="gear"></small-button><small-button name="legendsm" on></small-button><small-button name="edite"></small-button></div>
<div class="n">Array Name: V</div>
<div class="cols"><div><h3>Mapping Data</h3>
<div class="plot"><transfer-plot></transfer-plot><div class="tools">${'range rangec ranget rangeeye invert heart save hist gear'.split(' ').map(n => `<small-button name="${n}"></small-button>`).join('')}</div></div>
<div class="row" style="margin:6px 0 4px;align-items:center"><label for="d" style="width:46px">Data:</label><input id="d" type="text" value="6.91472"></div>
<label class="ck"><input type="checkbox">Use log scale when mapping data to colors</label>
<label class="ck"><input type="checkbox">Enable opacity mapping for surfaces</label>
<label class="ck dis"><input type="checkbox" disabled>Use log scale when mapping data to opacity</label>
<h3 style="margin-top:1px">Data Histogram</h3>
<label class="ck"><input type="checkbox">Display data histogram</label>
<label class="ck dis"><input type="checkbox" disabled>Automatically recompute data histogram</label>
<div class="r" style="margin-top:1px;align-items:center"><label for="nb">Number of bins:</label><input id="nb" type="range" value="4" disabled style="margin-top:0"><input type="text" aria-label="Bins" value="10" disabled></div>
<h3>Color Mapping Parameters</h3>
<div class="row"><span style="width:124px">Color Space</span><pv-select class="grow" value="Diverging" label="Color Space"></pv-select></div>
<button class="nan" type="button" style="margin:4px 0 3px"><i></i>Nan Color</button>
<div class="r"><label for="no">Nan Opacity</label><input id="no" type="range" value="100" style="--v:95%"><input type="text" aria-label="Nan Opacity value" value="1"></div>
<h3>Color Discretization</h3>
<label class="ck" style="height:23px;margin-bottom:1px"><input type="checkbox" checked>Discretize</label>
<div class="r" style="align-items:center"><label for="nt" style="line-height:17px">Number Of Table<br>Values</label><input id="nt" type="range" value="25" style="--v:24%;margin-top:0"><input type="text" aria-label="Table values" value="256"></div>
</div><div class="sb"><i></i></div></div>`);

define('render-view', `<style>:host{display:block;flex:1;min-width:0;box-sizing:border-box;background:#54576e;border:2px solid #0000f0;outline:1px solid #fff;margin:30px 1px 0 19px;overflow:hidden}svg{display:block}</style>
<svg width="914" height="750" viewBox="507 204 914 750" preserveAspectRatio="xMinYMin meet" font-family="Lato, sans-serif"><defs><linearGradient id="b" x2="0" y2="1"><stop stop-color="#f4a284"/><stop offset=".25" stop-color="#edcbb9"/><stop offset=".5" stop-color="#dcdddd"/><stop offset=".75" stop-color="#a9c4fc"/><stop offset="1" stop-color="#7f9ff9"/></linearGradient></defs>
<g class="h" fill="none"></g>
<path d="M1085 845l54 100" stroke="#f6f6f6" stroke-width="2"/><circle cx="1140" cy="946" r="4" fill="#e4ddd6"/>
<rect x="1304" y="742" width="16" height="212" fill="url(#b)"/>
<g fill="#f4f4f4" stroke="none" font-size="17"><text x="1334" y="768">20</text><text x="1334" y="824">15</text><text x="1334" y="881">10</text><text x="1334" y="937">5</text></g>
<path d="M1320 762h9M1320 818h9M1320 875h9M1320 931h9" stroke="#f4f4f4" stroke-width="2"/>
<text transform="translate(1412 909) rotate(-90)" font-size="18" fill="#f4f4f4">V Magnitude</text>
<path d="M603 900v-36" stroke="#19e02a" stroke-width="2"/><path d="M603 849l4 14h-8z" fill="#19e02a"/><path d="M602 902h-38" stroke="#d8e010" stroke-width="2"/><path d="M550 902l14-4v8z" fill="#d8e010"/><circle cx="603" cy="897" r="4" fill="#e22020"/>
<g fill="#fff" font-size="15"><text x="605" y="859">Z</text><text x="561" y="902">Y</text><text x="604" y="897">X</text></g></svg>`, (h, r) => {
  let seed = 7, out = ''; const rnd = () => (seed = seed * 16807 % 2147483647) / 2147483647;
  const line = (d, c, w) => out += `<path d="${d}" stroke="${c}" stroke-width="${w || 1}"/>`;
  const warm = ['#f2a07f', '#eba487', '#e89373', '#f0b29a', '#d98d74'];
  out += '<path d="M830 745h58l-10 60-16 60-22 20-20-10z" fill="#eba184"/>';
  for (let i = 0; i < 110; i++) { const x = 830 + rnd() * 64, y = 745 + rnd() * 20, t = (x - 830) / 64, ex = 820 + t * 46 + rnd() * 16, ey = 862 + rnd() * 54; line(`M${x} ${y}Q${ex - 4 + t * 8} ${y + 60} ${ex} ${ey}`, warm[i % 5]); }
  for (let i = 0; i < 14; i++) line(`M${826 + i / 2} 750q-10 70 ${-13 + i} ${120 + rnd() * 18}`, i < 6 ? '#86a9f6' : i < 10 ? '#d9e0ee' : '#f0c8b4', 2);
  for (let i = 0; i < 60; i++) { const x = 880 + i * 3; line(`M${x - 60} ${756 + rnd() * 8}q60 ${4 + rnd() * 8} ${80 + rnd() * 40} ${2 + rnd() * 14}`, warm[i % 5]); }
  for (let i = 0; i < 26; i++) { const t = i / 26; line(`M${1062 + t * 20} ${768 + t * 72}q-40 ${-14 + t * 6} -${74 - t * 30} ${-10 + t * 22}`, warm[i % 5]); }
  for (let i = 0; i < 50; i++) { const t = rnd(), x = 1050 + t * 22; line(`M${x} 745q${16 + t * 4} 60 ${26 + t * 14} ${80 + rnd() * 60}`, warm[i % 5]); }
  line('M1048 762q27 38 38 90', '#dfe6f4', 3); line('M1051 762q25 40 35 84q9 40 14 66', '#4f78ea', 3);
  r.querySelector('.h').innerHTML = out;
});

const PRESETS = [
 ['Cool to Warm', '#3b4cc0,#6788ee,#9abbff,#c9d7f0,#dddddd,#f2cab5,#f7a889,#e26952,#b40426'],
 ['Cool to Warm (Extended)', '#00005a,#1d3b73 13%,#3c7895 24%,#60a7bd 34%,#a8e0e8 42%,#d8f5f5 48%,#fcf3e0 53%,#f3c19b 60%,#e2795a 70%,#b33426 78%,#8b0d12 87%,#591232'],
 ['Black-Body Radiation', '#000,#e60000 40%,#e6e600 80%,#fff'],
 ['X Ray', '#fff,#000'],
 ['Inferno (matplotlib)', '#000004,#280b54 16%,#65156e 30%,#9f2a63 44%,#d44842 58%,#f57d15 71%,#fca50a 79%,#fac62d 87%,#fcffa4'],
 ['Black, Blue and White', '#000,#000080 33%,#0080ff 66%,#fff'],
 ['Blue Orange (divergent)', '#190e42,#0c0786 8%,#1059b9 18%,#05b6d0 31%,#3fe8dc 38%,#b8fadc 44%,#fffef4 50%,#fae88a 57%,#e0a838 66%,#d0651f 78%,#900a0a 90%,#330010'],
 ['Viridis (matplotlib)', '#440154,#482878,#3e4a89,#31688e,#26828e,#1f9e89,#35b779,#6ece58,#b5de2b,#fde725'],
 ['Gray and Red', '#1a1a1a,#4d4d4d 12%,#878787 22%,#bababa 32%,#e0e0e0 42%,#fff 50%,#fddbc7 60%,#f4a582 69%,#d6604d 79%,#b2182b 88%,#67001f'],
 ['Linear Green (Gr4L)', '#0e1c1f,#1a4a3f 18%,#20704a 32%,#1d8c2d 43%,#13a00f 53%,#7cc93a 70%,#d2e878 87%,#fffce0'],
 ['Cold and Hot', '#0ff,#00f 45%,#000080 50%,#f00 55%,#ff0'],
 ['Blue - Green - Orange', '#d6e8fb,#7db8e8 8%,#2a7bc0 17%,#144f8c 26%,#1c3a62 32%,#0f5a33 38%,#18731c 47%,#5d9c42 57%,#a8c078 63%,#e8dc96 68%,#e6bc80 75%,#d07850 84%,#a83c28 92%,#6e0400'],
 ['Rainbow Desaturated', '#4747db,#00005c,#00ffff,#008000,#ffff00,#ff6100,#6b0000,#e04c4c'],
 ['Yellow - Gray - Blue', '#4a0a10,#a02008 6%,#e07508 14%,#f5c23c 22%,#fbf08a 28%,#fffff0 33%,#c4c4ae 37%,#8a8474 47%,#5a4c44 57%,#3a2a26 65%,#25344f 67%,#4a6184 77%,#8ba5c4 88%,#d8eefa'],
 ['Rainbow Uniform', '#0560ff,#0a9bd0 15%,#00e64a 36%,#a0f020 42%,#ffff00 50%,#ffcb45 60%,#ff7a38 76%,#ff2a2f 85%,#a80f6e'],
 ['jet', '#000080,#0000ff 11%,#00ffff 36%,#ffff00 62%,#ff0000 87%,#800000']];
const cell = p => `<td><div><i style="background:linear-gradient(90deg,${p[1]})"></i><span>${p[0]}</span></div></td>`;
define('preset-table', `<style>${CONTROLS}
:host{border:1px solid #b0b0b0;background:#fff;height:477px;font:15px/20px "Open Sans",sans-serif}
table{border-collapse:collapse;table-layout:fixed;width:100%}
th{height:22px;padding:0;font-weight:400;background:linear-gradient(#fbfbfb,#ececec);border-bottom:1px solid #a9a9a9}
th+th{border-left:1px solid #c6c6c6}
td{height:55px;padding:0;border:1px solid #c6c6c6} tr:first-child td{border-top:0}
td div{display:flex;align-items:center;gap:6px;padding-left:2px}
i{width:180px;height:20px;flex:none}
span{font-weight:700;font-size:15px;text-decoration:underline;white-space:nowrap}
</style><table><thead><tr><th scope="col">Presets</th><th scope="col">Presets</th></tr></thead><tbody>${[0, 1, 2, 3, 4, 5, 6, 7].map(i => `<tr>${cell(PRESETS[2 * i])}${cell(PRESETS[2 * i + 1])}</tr>`).join('')}</tbody></table>`);

define('choose-preset', `<style>${CONTROLS}
:host{position:absolute;left:453px;top:174px;width:1013px;border:1px solid #9d9d9d;background:#efefef;box-shadow:0 1px 12px rgba(0,0,0,.4)}
.g{display:grid;grid-template-columns:minmax(0,1fr) 181px;column-gap:4px;padding:13px 13px 0 13px}
.s{display:grid;grid-template-columns:minmax(0,1fr) 87px;gap:4px;margin-bottom:4px}
.s input[type=text]{height:23px}
.tip{font:bold 15px/18px "Liberation Mono",monospace;margin:4px 0 12px}
.o{display:flex;flex-direction:column}
.o h3{margin:0 0 5px;height:22px}
.ck{display:flex;align-items:center;gap:6px;height:25px;color:#bdbdbd}
.o button{height:24px;width:100%;margin-bottom:4px}
title-bar{width:100%;height:36px}
.end{display:flex;align-items:center;margin-right:21px;gap:49px;font-size:14px}
</style>
<title-bar>Choose Preset<span slot="end" class="end">?<svg width="13" height="13"><path d="M1 1l11 11M12 1L1 12" stroke="#777"/></svg></span></title-bar>
<div class="g"><div><div class="s"><input type="text" aria-label="Search presets" placeholder="Search ... (use Esc to clear text)"><pv-select value="default" label="Group"></pv-select></div><preset-table></preset-table><div class="tip">Tip: &lt;click&gt; to select, &lt;double-click&gt; to apply a preset.</div></div>
<div class="o"><h3>Options to load:</h3><label class="ck"><input type="checkbox" checked disabled>Colors</label><label class="ck"><input type="checkbox" checked disabled>Opacities</label><label class="ck"><input type="checkbox" disabled>Use preset range</label>
<h3 style="margin-top:110px">Actions on selected:</h3><label class="ck" style="height:34px;line-height:17px"><input type="checkbox" checked disabled><span>Show current preset<br>in default mode</span></label>
<div style="margin-top:117px"><button type="button" disabled>Apply</button><button type="button">Import</button><button type="button" disabled>Export</button><button type="button" disabled>Remove</button><button type="button" style="margin:0">Close</button></div></div></div>`);

define('main-window', `<style>:host{display:flex;flex-direction:column;position:relative;min-width:0;background:#efefef;border-left:1px solid #a0a0a0;overflow:hidden;height:100vh;box-sizing:border-box}
.top{margin-top:-21px}.w{display:flex;flex:1;min-height:0}.l{width:476px;flex:none;display:flex;flex-direction:column;overflow:hidden}
</style><title-bar class="top">ParaView 5.6.1<svg slot="end" style="margin-right:14px" width="69" height="12"><path d="M1 1h10v10H1zM58 1l10 10M68 1L58 11" fill="none" stroke="#777"/></svg></title-bar><menu-bar></menu-bar><pv-toolbars></pv-toolbars>
<div class="w"><div class="l"><pipeline-browser></pipeline-browser><properties-panel></properties-panel></div><render-view></render-view><color-map-editor></color-map-editor></div><choose-preset></choose-preset>`);

define('other-window', `<style>${CONTROLS}
:host{background:linear-gradient(#e9e9eb 0,#efeff0 60%,#cfcfd3 85%,#c4c4c8);overflow:hidden;font:12px/20px "Open Sans",sans-serif;color:#222;height:100vh;white-space:nowrap}
.b{height:40px;background:#000}.t{height:23px;background:#c4c4c4;padding:3px 2px}.m{height:18px;line-height:18px;padding-left:6px;color:#888;border-bottom:1px solid #999}
.bar{height:34px;border-bottom:1px solid #aaa;padding:4px 0 0 4px;display:flex;gap:11px;overflow:hidden}.bar b{width:5px;height:26px;border:solid #999;border-width:0 1px}
.p{height:19px;padding-left:1px}
.p.a{font-size:11px}
.tree{height:320px;background:#fafafa;border:1px solid #888;border-right:0;padding:28px 0 0 4px;display:grid;grid-auto-rows:22px}
.tree pv-eye{width:14px}
.r{height:26px;display:flex;align-items:center;padding-left:9px;font-size:11px}
.s{height:25px}
input[type=checkbox]{width:12px;height:12px;background-size:10px 10px}
.bx{margin-left:9px;border:1px solid #777;border-right:0}
</style><div class="b"></div><div class="t"><pv-icon name="logo" size="15"></pv-icon></div><div class="m">File</div>
<div class="bar"><b></b><pv-icon name="heart" size="22"></pv-icon></div><div class="bar"><b></b><pv-icon name="legend" size="26"></pv-icon></div><div class="bar"><b></b><pv-icon name="calc" size="26"></pv-icon></div>
<div class="p a" style="margin-top:2px">Pipel</div><div class="tree"><pv-eye></pv-eye><pv-eye shut></pv-eye><pv-eye></pv-eye><pv-eye></pv-eye></div>
<div class="r" style="padding-left:11px;margin-top:4px">Pro</div><div class="p a">Prop</div><div class="bx" style="height:25px;margin-top:8px;border-width:0 0 1px 1px"></div><div class="bx" style="height:18px;margin-top:8px;line-height:16px;font-size:11px;color:#888;background:#fff">Se</div>
<div style="height:14px"></div>
${['Sca', 'Vec', 'Num'].map(t => `<div class="r">${t}</div>`).join('')}<div class="r" style="height:20px"><input type="checkbox" checked aria-label="Seed"></div>${['Rad', 'Var', 'Rad'].map(t => `<div class="r s">${t}</div>`).join('')}<div class="r" style="height:20px"><input type="checkbox" aria-label="Option"></div><div class="r" style="height:30px">De</div><div class="bx" style="height:27px;margin-top:3px"></div><div class="r" style="height:30px">Rep</div><div class="r" style="font-weight:700;text-decoration:underline">Co</div>`);

define('level-meter', `<style>:host{position:absolute;right:23px;top:304px;width:18px;height:53px;background:#404040;border-radius:2px 0 0 2px;box-sizing:border-box;padding:7px 6px;display:block}i{display:block;height:19px;background:repeating-linear-gradient(#777 0,#777 1px,transparent 1px,transparent 3px);border-bottom:1px solid #e9a53a;margin-bottom:2px}i+i{border-color:#8ee23a}</style><i></i><i></i>`);
define('red-marks', `<style>:host{position:absolute;left:456px;top:311px;width:402px;height:247px;pointer-events:none;display:block}svg{display:block}</style><svg width="402" height="247" aria-hidden="true"><rect x="2" y="1" width="398" height="87" rx="3" fill="none" stroke="#ff2414" stroke-width="3"/><path d="M367 107l9 14-4-1 2 126h-1l-9-126-5 1z" fill="#ff2414"/></svg>`);
define('pv-desktop', `<style>:host{display:grid;grid-template-columns:8px minmax(0,1fr) 23px;height:100vh;position:relative;overflow:hidden}
.l{background:linear-gradient(#dde1e5 21px,#f8f8f8 21px,#f8f8f8 105px,#ddd 106px,#ebebeb 107px,#f0f0f0 175px,#d4d4d4 176px,#f8f8f8 177px,#f8f8f8 241px,#ccc 242px,#e6e6e6 243px)}</style><div class="l"></div><main-window></main-window><other-window></other-window><level-meter></level-meter><red-marks></red-marks>`);
</script>
</body>
</html>
